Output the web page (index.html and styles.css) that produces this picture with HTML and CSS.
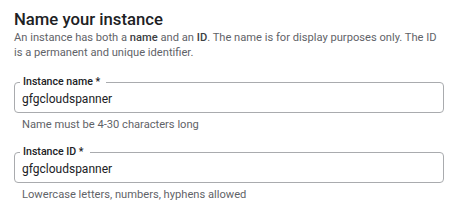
FILE: index.html
```html
<!DOCTYPE html>
<html lang="en">
<head>
  <meta charset="utf-8">
  <title>Name your instance</title>
  <link rel="stylesheet" href="styles.css">
</head>
<body>
  <div class="section">
    <h2 class="title">Name your instance</h2>
    <p class="desc">An instance has both a <b>name</b> and an <b>ID</b>. The name is for display purposes only. The ID is a permanent and unique identifier.</p>

    <div class="field">
      <fieldset class="outline">
        <legend>Instance name *</legend>
        <input class="value" type="text" value="gfgcloudspanner">
      </fieldset>
      <div class="hint">Name must be 4-30 characters long</div>
    </div>

    <div class="field">
      <fieldset class="outline">
        <legend>Instance ID *</legend>
        <input class="value" type="text" value="gfgcloudspanner">
      </fieldset>
      <div class="hint">Lowercase letters, numbers, hyphens allowed</div>
    </div>
  </div>
</body>
</html>
```

FILE: styles.css
```css
:root {
  --font: Roboto, "Liberation Sans", Arial, sans-serif;
  --text-dark: #202124;
  --text-muted: #5f6368;
  --border: #a9abae;
}

* {
  box-sizing: border-box;
  margin: 0;
  padding: 0;
}

body {
  font-family: var(--font);
  background: #ffffff;
  color: var(--text-dark);
}

.section {
  padding: 10px 30px 0 14px;
}

.title {
  font-size: 16.7px;
  font-weight: 500;
  line-height: 20px;
  color: var(--text-dark);
}

.desc {
  font-size: 11.15px;
  line-height: 15px;
  color: var(--text-muted);
  max-width: 428px;
}

.desc b {
  font-weight: 500;
  color: #3c4043;
}

.field {
  margin-top: 15px;
}

.field + .field {
  margin-top: 12px;
}

.outline {
  border: 1px solid var(--border);
  border-radius: 4px;
  padding: 0 8px 3px 5px;
  width: 430px;
}

.outline legend {
  font-size: 10.6px;
  font-weight: 500;
  line-height: 14px;
  padding: 0 6px 0 3px;
  color: var(--text-dark);
}

.value {
  display: block;
  width: 100%;
  border: none;
  outline: none;
  background: transparent;
  font-family: var(--font);
  font-size: 12px;
  line-height: 20px;
  height: 20px;
  padding: 0 0 0 2px;
  color: var(--text-dark);
}

.hint {
  font-size: 11.15px;
  line-height: 16px;
  margin-top: 4px;
  padding-left: 8px;
  color: var(--text-muted);
}
```
